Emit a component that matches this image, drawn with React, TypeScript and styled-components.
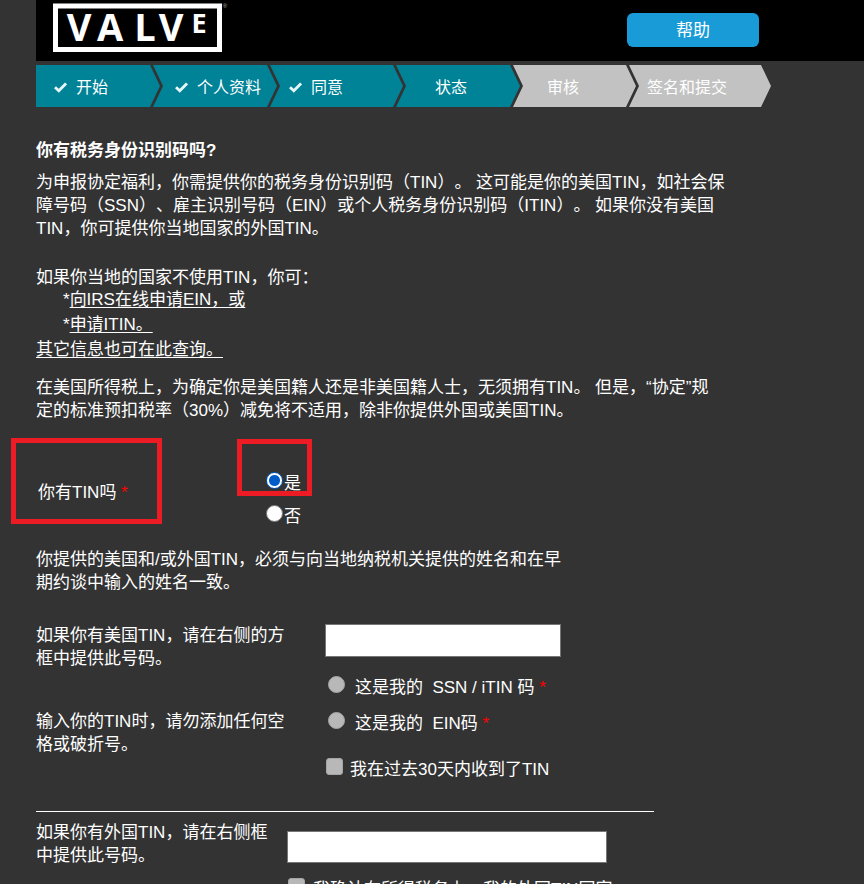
import React, { useState } from "react";
import styled, { createGlobalStyle } from "styled-components";

const GlobalStyle = createGlobalStyle`
  *, *::before, *::after { box-sizing: border-box; }
  body {
    margin: 0;
    background: #333333;
    color: #ffffff;
    font-family: "Liberation Sans", "Noto Sans CJK SC", sans-serif;
    font-size: 17px;
    line-height: 23px;
    text-spacing-trim: space-all;
  }
`;

const Page = styled.div`
  height: 100vh;
  overflow: hidden;
  padding-left: 36px;
`;

const Header = styled.header`
  display: flex;
  justify-content: space-between;
  align-items: flex-start;
  height: 61px;
  padding: 0 105px 0 16px;
  background: #000000;
`;

const Logo = styled.svg`
  display: block;
  width: 178px;
  height: 54px;
  overflow: visible;
`;

const HelpButton = styled.button`
  width: 132px;
  height: 34px;
  margin-top: 13px;
  border: 0;
  border-radius: 6px;
  background: #199bd7;
  color: #ffffff;
  font: inherit;
  cursor: pointer;
`;

const Steps = styled.ol`
  display: flex;
  margin: 4px 0 0;
  padding: 0;
  list-style: none;
`;

const Step = styled.li<{ $width: number; $indent: number; $done: boolean }>`
  display: flex;
  align-items: center;
  gap: 9px;
  flex: none;
  width: ${(p) => p.$width}px;
  height: 42px;
  padding: 2px 0 0 ${(p) => p.$indent}px;
  background: ${(p) => (p.$done ? "#008297" : "#c2c2c2")};
  font-size: 16px;
  clip-path: polygon(0 0, calc(100% - 10px) 0, 100% 50%, calc(100% - 10px) 100%, 0 100%, 10px 50%);

  & + & { margin-left: -7px; }
  &:first-child {
    clip-path: polygon(0 0, calc(100% - 10px) 0, 100% 50%, calc(100% - 10px) 100%, 0 100%);
  }
`;

const Main = styled.main`
  padding-top: 32px;
`;

const Heading = styled.h1`
  margin: 0 0 9px;
  font-size: 17px;
  line-height: 23px;
`;

const Text = styled.p<{ $width: number; $gap?: number }>`
  display: block;
  max-width: ${(p) => p.$width}px;
  margin: 0 0 ${(p) => p.$gap ?? 0}px;
`;

const LinkList = styled.ul`
  display: flex;
  flex-direction: column;
  gap: 3px;
  margin: 0 0 15px;
  padding: 0;
  list-style: none;
  line-height: 22px;
`;

const LinkItem = styled.li<{ $nested?: boolean }>`
  padding-left: ${(p) => (p.$nested ? 27 : 0)}px;
`;

const Link = styled.a`
  color: inherit;
  text-decoration: underline;
  text-decoration-skip-ink: none;
  text-underline-offset: 2px;
`;

const Question = styled.fieldset`
  position: relative;
  display: grid;
  grid-template-columns: 228px 1fr;
  margin: 0 0 20px;
  padding: 48px 0 0 2px;
  border: 0;
  min-width: 0;
`;

const QuestionLabel = styled.div`
  padding-top: 11px;
`;

const Choices = styled.div`
  display: flex;
  flex-direction: column;
  gap: 8px;
`;

const Required = styled.span`
  color: #ff0000;
`;

const ChoiceLabel = styled.label<{ $gap: number }>`
  display: flex;
  align-items: flex-start;
  gap: ${(p) => p.$gap}px;
  white-space: pre;
`;

const ChoiceText = styled.span`
  padding-top: 2px;
`;

const Radio = styled.input`
  appearance: none;
  flex: none;
  width: 17px;
  height: 17px;
  margin: 2px 0 0;
  border: 1px solid #767676;
  border-radius: 50%;
  background: #ffffff;

  &:checked {
    border-color: #005cc8;
    background: radial-gradient(circle, #005cc8 0 5px, #ffffff 6px);
  }
  &:disabled {
    border-color: #a5a5a5;
    background: #b8b8b8;
  }
`;

const Checkbox = styled(Radio)`
  border-radius: 3px;
`;

const Highlight = styled.div<{ $left: number; $top: number; $width: number; $height: number }>`
  position: absolute;
  left: ${(p) => p.$left}px;
  top: ${(p) => p.$top}px;
  width: ${(p) => p.$width}px;
  height: ${(p) => p.$height}px;
  border: 5px solid #ed1c24;
  pointer-events: none;
`;

const UsSection = styled.section`
  display: grid;
  grid-template-columns: 289px 1fr;
  max-width: 618px;
  padding-bottom: 30px;
  border-bottom: 1px solid #ffffff;
`;

const ForeignSection = styled.section`
  display: grid;
  grid-template-columns: 251px 1fr;
  padding-top: 9px;
`;

const TextInput = styled.input<{ $width: number; $height: number }>`
  display: block;
  width: ${(p) => p.$width}px;
  height: ${(p) => p.$height}px;
  padding: 1px 4px;
  border: 1px solid #767676;
  background: #ffffff;
  font: inherit;
`;

const IdChoices = styled.div`
  display: flex;
  flex-direction: column;
  gap: 11px;
  padding: 17px 0 21px 3px;
`;

const CheckRow = styled.div`
  padding-left: 1px;
`;

const ForeignFields = styled.div`
  display: flex;
  flex-direction: column;
  gap: 13px;
  padding-top: 10px;
`;

const steps = [
  { label: "开始", width: 124, indent: 18, done: true, check: true },
  { label: "个人资料", width: 124, indent: 22, done: true, check: true },
  { label: "同意", width: 133, indent: 19, done: true, check: true },
  { label: "状态", width: 124, indent: 39, done: true, check: false },
  { label: "审核", width: 123, indent: 34, done: false, check: false },
  { label: "签名和提交", width: 142, indent: 18, done: false, check: false },
];

function CheckMark() {
  return (
    <svg width="13" height="11" viewBox="0 0 13 11" aria-hidden="true">
      <path d="M1 5.2 4.8 8.8 12 1.4" fill="none" stroke="#e6f5f7" strokeWidth="2.8" />
    </svg>
  );
}

function ValveLogo() {
  return (
    <Logo viewBox="0 0 178 54" role="img" aria-label="Valve">
      <rect x="3.5" y="6" width="164" height="43.5" fill="none" stroke="#fff" strokeWidth="5" />
      <g fill="#fff" fontFamily="Open Sans, sans-serif" fontWeight="700" fontSize="38" textAnchor="middle">
        <text x="27" y="41">V</text>
        <text x="58" y="41">A</text>
        <text x="93" y="41">L</text>
        <text x="119" y="41">V</text>
        <text x="147" y="33" fontSize="27">E</text>
      </g>
      <text x="173" y="8" fill="#aaa" fontFamily="Liberation Sans" fontSize="6" textAnchor="middle">®</text>
    </Logo>
  );
}

export default function App() {
  const [hasTin, setHasTin] = useState(true);

  return (
    <>
      <GlobalStyle />
      <Page>
        <Header>
          <ValveLogo />
          <HelpButton type="button">帮助</HelpButton>
        </Header>
        <Steps>
          {steps.map((s) => (
            <Step key={s.label} $width={s.width} $indent={s.indent} $done={s.done}>
              {s.check && <CheckMark />}
              {s.label}
            </Step>
          ))}
        </Steps>
        <Main>
          <Heading>你有税务身份识别码吗?</Heading>
          <Text $width={694} $gap={26}>
            为申报协定福利，你需提供你的税务身份识别码（TIN）。 这可能是你的美国TIN，如社会保障号码（SSN）、雇主识别号码（EIN）或个人税务身份识别码（ITIN）。 如果你没有美国TIN，你可提供你当地国家的外国TIN。
          </Text>
          <Text $width={694}>如果你当地的国家不使用TIN，你可：</Text>
          <LinkList>
            <LinkItem $nested>*<Link href="#ein">向IRS在线申请EIN，或</Link></LinkItem>
            <LinkItem $nested>*<Link href="#itin">申请ITIN。</Link></LinkItem>
            <LinkItem><Link href="#info">其它信息也可在此查询。</Link></LinkItem>
          </LinkList>
          <Text $width={682}>
            在美国所得税上，为确定你是美国籍人还是非美国籍人士，无须拥有TIN。 但是，“协定”规定的标准预扣税率（30%）减免将不适用，除非你提供外国或美国TIN。
          </Text>
          <Question aria-labelledby="has-tin">
            <QuestionLabel id="has-tin">你有TIN吗 <Required>*</Required></QuestionLabel>
            <Choices>
              <ChoiceLabel $gap={1}>
                <Radio type="radio" name="hasTin" checked={hasTin} onChange={() => setHasTin(true)} />
                <ChoiceText>是</ChoiceText>
              </ChoiceLabel>
              <ChoiceLabel $gap={1}>
                <Radio type="radio" name="hasTin" checked={!hasTin} onChange={() => setHasTin(false)} />
                <ChoiceText>否</ChoiceText>
              </ChoiceLabel>
            </Choices>
            <Highlight $left={-25} $top={16} $width={151} $height={86} />
            <Highlight $left={201} $top={17} $width={75} $height={57} />
          </Question>
          <Text $width={536} $gap={30}>
            你提供的美国和/或外国TIN，必须与向当地纳税机关提供的姓名和在早期约谈中输入的姓名一致。
          </Text>
          <UsSection>
            <div>
              <Text as="label" htmlFor="us-tin" $width={256} $gap={40}>
                如果你有美国TIN，请在右侧的方框中提供此号码。
              </Text>
              <Text $width={256}>输入你的TIN时，请勿添加任何空格或破折号。</Text>
            </div>
            <div>
              <TextInput id="us-tin" type="text" $width={236} $height={33} />
              <IdChoices>
                <ChoiceLabel $gap={10}>
                  <Radio type="radio" name="idKind" disabled />
                  <ChoiceText>{"这是我的  SSN / iTIN 码 "}<Required>*</Required></ChoiceText>
                </ChoiceLabel>
                <ChoiceLabel $gap={10}>
                  <Radio type="radio" name="idKind" disabled />
                  <ChoiceText>{"这是我的  EIN码 "}<Required>*</Required></ChoiceText>
                </ChoiceLabel>
              </IdChoices>
              <CheckRow>
                <ChoiceLabel $gap={7}>
                  <Checkbox type="checkbox" disabled />
                  <ChoiceText>我在过去30天内收到了TIN</ChoiceText>
                </ChoiceLabel>
              </CheckRow>
            </div>
          </UsSection>
          <ForeignSection>
            <Text as="label" htmlFor="foreign-tin" $width={240}>
              如果你有外国TIN，请在右侧框中提供此号码。
            </Text>
            <ForeignFields>
              <TextInput id="foreign-tin" type="text" $width={320} $height={32} />
              <CheckRow>
                <ChoiceLabel $gap={8}>
                  <Checkbox type="checkbox" disabled />
                  <ChoiceText>我确认在所得税务上，我的外国TIN国家</ChoiceText>
                </ChoiceLabel>
              </CheckRow>
            </ForeignFields>
          </ForeignSection>
        </Main>
      </Page>
    </>
  );
}
